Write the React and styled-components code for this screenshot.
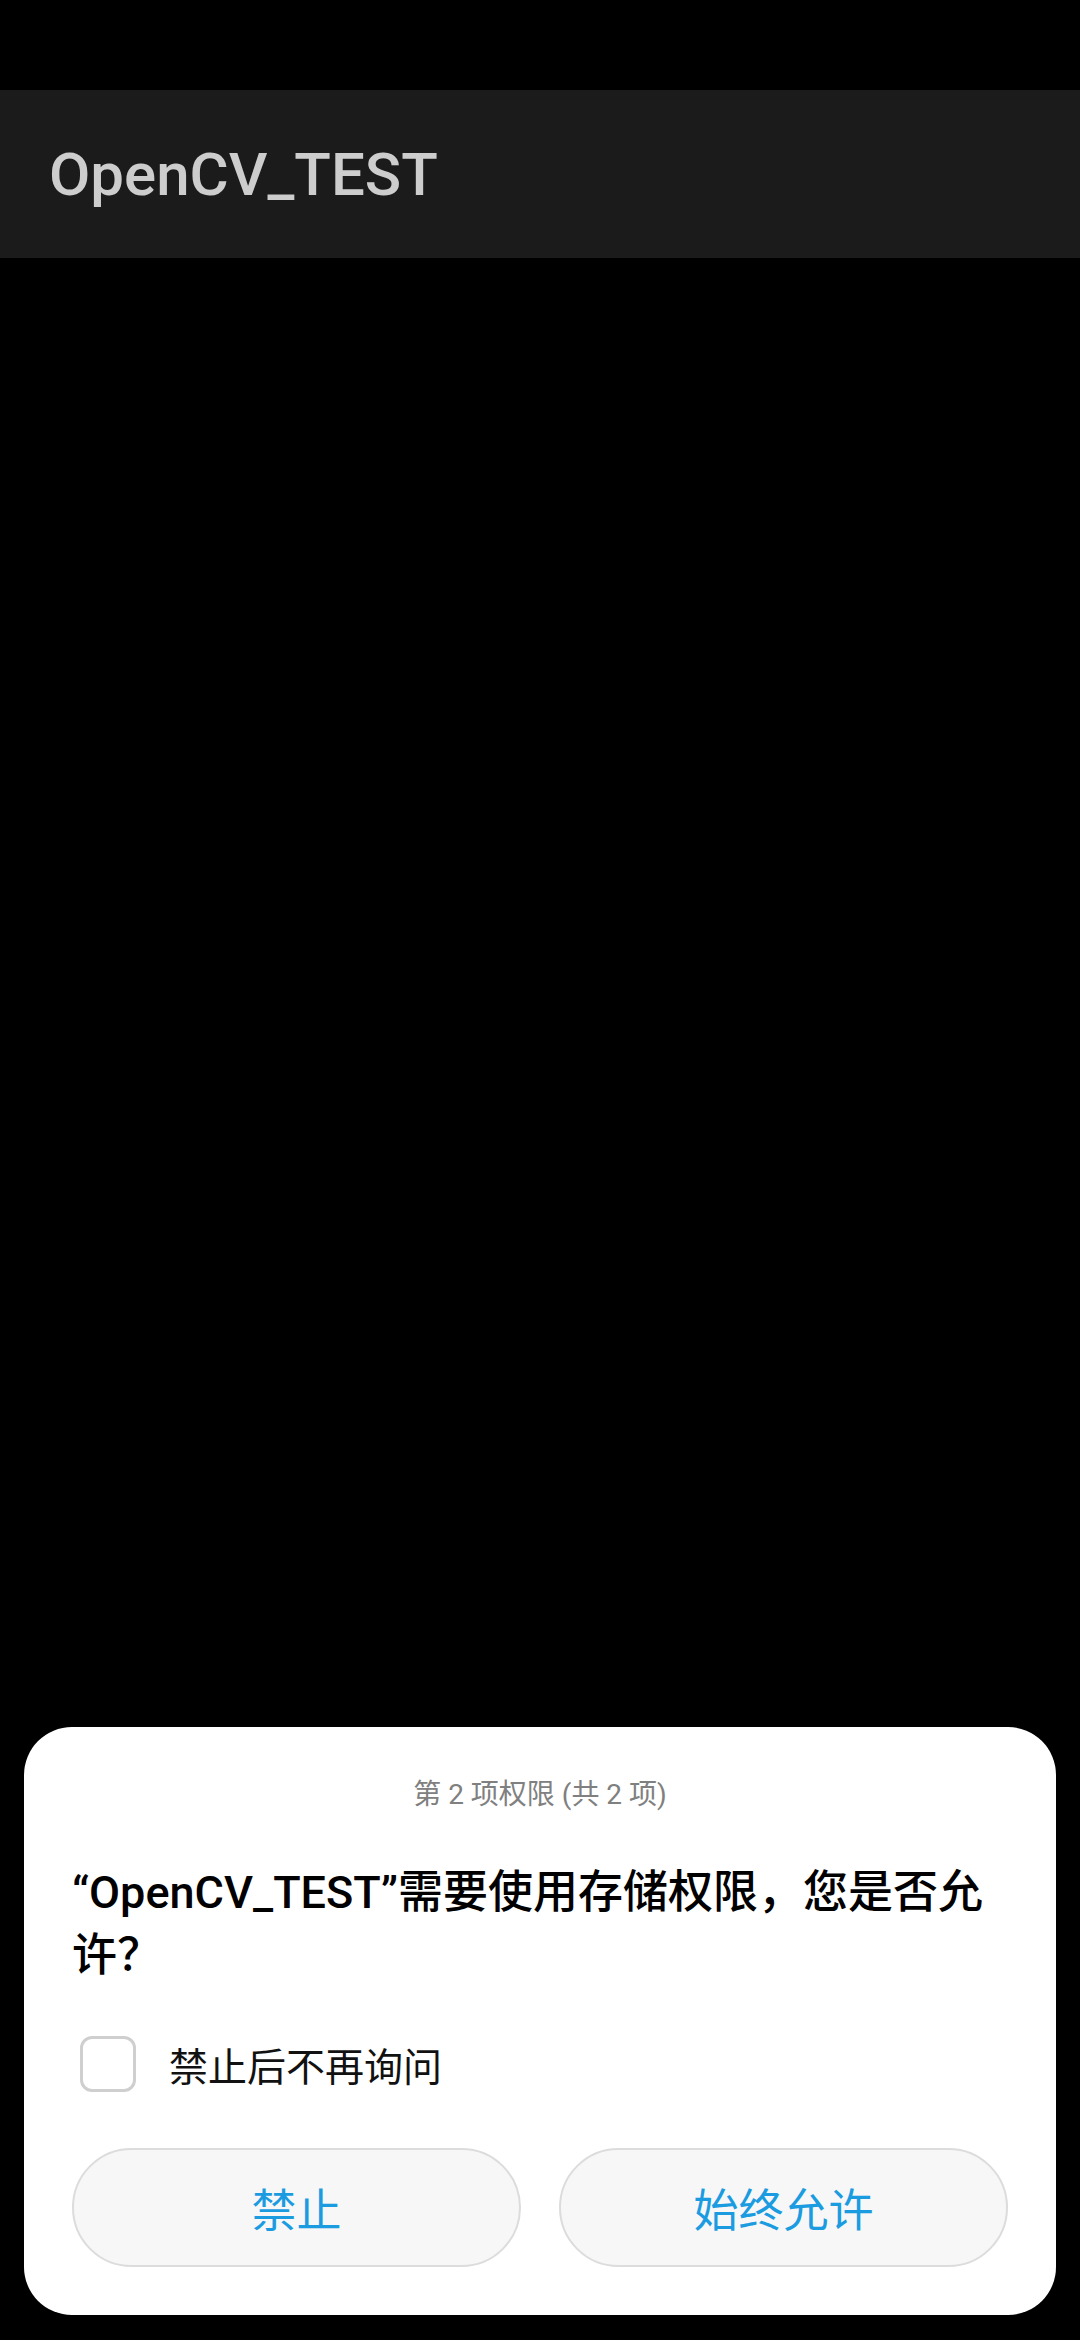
import React, { useState } from 'react'
import styled, { createGlobalStyle } from 'styled-components'

const GlobalStyle = createGlobalStyle`
  html, body {
    margin: 0;
    padding: 0;
    background: #000;
  }
  * {
    box-sizing: border-box;
  }
`

const fontStack = `Roboto, "Noto Sans CJK SC", "Noto Sans", sans-serif`

const Screen = styled.div`
  width: 1080px;
  height: 2340px;
  display: flex;
  flex-direction: column;
  background: #000;
  font-family: ${fontStack};
`

const StatusBar = styled.div`
  height: 90px;
  background: #000;
`

const AppBar = styled.header`
  height: 168px;
  display: flex;
  align-items: center;
  padding-left: 49px;
  background: #1b1b1b;
`

const AppTitle = styled.h1`
  margin: 0;
  font-size: 60px;
  font-weight: 500;
  color: #cdcdcd;
`

const Content = styled.main`
  flex: 1;
  display: flex;
  flex-direction: column;
  justify-content: flex-end;
  padding: 0 24px 25px;
`

const Dialog = styled.section`
  background: #fff;
  border-radius: 48px;
  padding: 48px;
  display: flex;
  flex-direction: column;
`

const Step = styled.div`
  text-align: center;
  font-size: 28px;
  line-height: 40px;
  color: #808080;
`

const Question = styled.h2`
  margin: 46px 0 0;
  font-size: 45px;
  line-height: 63px;
  font-weight: 500;
  color: #000;
`

const CheckRow = styled.label`
  margin-top: 49px;
  height: 56px;
  display: flex;
  align-items: center;
  gap: 33px;
  padding-left: 8px;
  cursor: pointer;
`

const Box = styled.span`
  width: 56px;
  height: 56px;
  border: 3px solid #cfcfcf;
  border-radius: 12px;
  background: ${({ checked }) => (checked ? '#1b9ce1' : '#fff')};
`

const CheckText = styled.span`
  font-size: 39px;
  color: #111;
`

const Buttons = styled.div`
  margin-top: 56px;
  display: grid;
  grid-template-columns: 1fr 1fr;
  gap: 38px;
`

const Button = styled.button`
  height: 119px;
  border: 2px solid #dcdcdc;
  border-radius: 60px;
  background: #f7f7f7;
  color: #1b9ce1;
  font-family: ${fontStack};
  font-size: 45px;
  cursor: pointer;
  &:active {
    background: #ececec;
  }
`

function App() {
  const [dontAsk, setDontAsk] = useState(false)

  return (
    <Screen>
      <GlobalStyle />
      <StatusBar />
      <AppBar>
        <AppTitle>OpenCV_TEST</AppTitle>
      </AppBar>
      <Content>
        <Dialog>
          <Step>第 2 项权限 (共 2 项)</Step>
          <Question>“OpenCV_TEST”需要使用存储权限，您是否允许？</Question>
          <CheckRow onClick={() => setDontAsk(!dontAsk)}>
            <Box checked={dontAsk} />
            <CheckText>禁止后不再询问</CheckText>
          </CheckRow>
          <Buttons>
            <Button>禁止</Button>
            <Button>始终允许</Button>
          </Buttons>
        </Dialog>
      </Content>
    </Screen>
  )
}

export default App
